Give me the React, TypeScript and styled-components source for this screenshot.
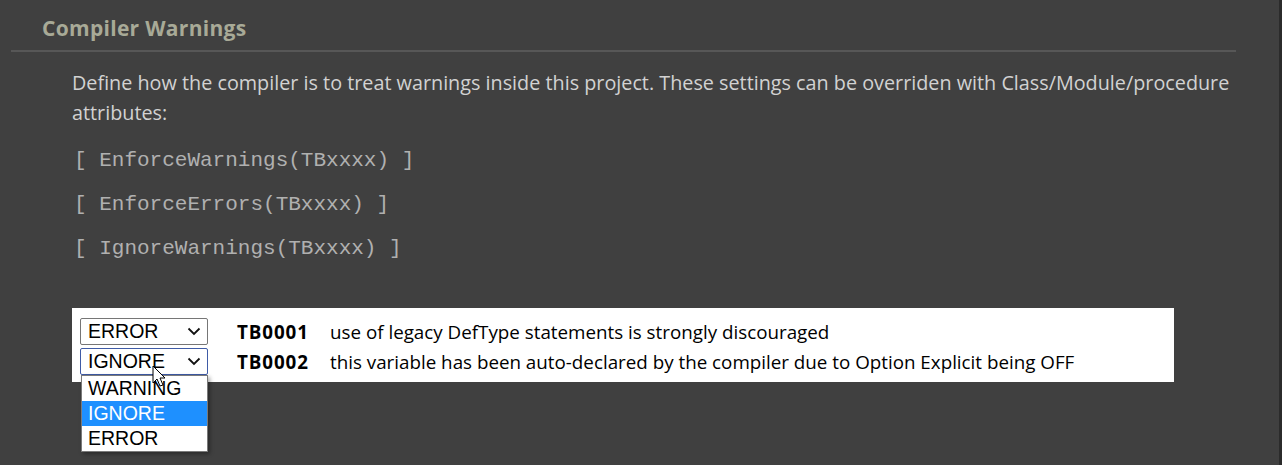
import React from "react";
import styled, { createGlobalStyle } from "styled-components";

const GlobalStyle = createGlobalStyle`
  html, body {
    margin: 0;
    padding: 0;
    background: #404040;
  }
  #root {
    height: 465px;
  }
`;

const Page = styled.div`
  display: flex;
  width: 1282px;
  height: 465px;
  overflow: hidden;
  background: #404040;
`;

const Content = styled.div`
  flex: 1;
  padding-left: 11px;
`;

const ScrollEdge = styled.div`
  width: 3px;
  background: #2b2b2b;
`;

const Heading = styled.h2`
  box-sizing: border-box;
  width: 1225px;
  margin: 0;
  padding: 15px 0 9px 31px;
  font-family: "Open Sans", "Noto Sans", sans-serif;
  font-weight: 700;
  font-size: 21px;
  letter-spacing: 0.3px;
  line-height: 26px;
  color: #a8aa97;
  border-bottom: 2px solid #575757;
`;

const Body = styled.div`
  display: flex;
  flex-direction: column;
  align-items: flex-start;
  padding: 16px 0 0 61px;
`;

const Intro = styled.p`
  margin: 0 0 4px;
  font-family: "Open Sans", "Noto Sans", sans-serif;
  font-size: 19.8px;
  line-height: 30px;
  color: #d2d2d2;
`;

const CodeLine = styled.div`
  margin-top: 14px;
  padding-left: 2px;
  font-family: "Liberation Mono", "Courier New", monospace;
  font-size: 21px;
  line-height: 30px;
  color: #b0b0b0;
  white-space: pre;
`;

const Table = styled.div`
  position: relative;
  margin-top: 44px;
  width: 1102px;
  padding: 10px 0 7px 8px;
  box-sizing: border-box;
  background: #ffffff;
  display: flex;
  flex-direction: column;
  gap: 3px;
`;

const Row = styled.div`
  display: flex;
  align-items: center;
  height: 27px;
  font-family: "Open Sans", "Noto Sans", sans-serif;
  font-size: 18.8px;
  color: #000;
`;

const Select = styled.div<{ $focused?: boolean }>`
  box-sizing: border-box;
  width: 128px;
  height: 27px;
  display: flex;
  align-items: center;
  justify-content: space-between;
  padding: 0 6px 0 7px;
  border: 1px solid ${(p) => (p.$focused ? "#3f5ba6" : "#767676")};
  border-radius: 2px;
  font-family: "Liberation Sans", Arial, sans-serif;
  font-size: 19.5px;
  color: #000;
  background: #fff;
`;

const Code = styled.span`
  width: 93px;
  margin-left: 29px;
  font-weight: 700;
  letter-spacing: 0.9px;
`;

const Desc = styled.span``;

const Menu = styled.div`
  position: absolute;
  left: 9px;
  top: 67px;
  width: 127px;
  box-sizing: border-box;
  border: 1px solid #7a7a7a;
  background: #fff;
  box-shadow: 2px 2px 4px rgba(0, 0, 0, 0.35);
  z-index: 2;
`;

const Option = styled.div<{ $active?: boolean }>`
  height: 25px;
  line-height: 25px;
  padding-left: 6px;
  font-family: "Liberation Sans", Arial, sans-serif;
  font-size: 19.5px;
  color: ${(p) => (p.$active ? "#fff" : "#000")};
  background: ${(p) => (p.$active ? "#1e90ff" : "#fff")};
`;

const Cursor = styled.svg`
  position: absolute;
  left: 80px;
  top: 57px;
  z-index: 3;
`;

const Chevron = () => (
  <svg width="14" height="9" viewBox="0 0 14 9">
    <path d="M1.5 1.5 L7 7 L12.5 1.5" fill="none" stroke="#111" strokeWidth="1.8" />
  </svg>
);

const rules = [
  { level: "ERROR", code: "TB0001", text: "use of legacy DefType statements is strongly discouraged" },
  {
    level: "IGNORE",
    code: "TB0002",
    text: "this variable has been auto-declared by the compiler due to Option Explicit being OFF",
  },
];

export default function App() {
  return (
    <Page>
      <GlobalStyle />
      <Content>
        <Heading>Compiler Warnings</Heading>
        <Body>
          <Intro>
            Define how the compiler is to treat warnings inside this project. These settings can be
            overriden with Class/Module/procedure attributes:
          </Intro>
          <CodeLine>[ EnforceWarnings(TBxxxx) ]</CodeLine>
          <CodeLine>[ EnforceErrors(TBxxxx) ]</CodeLine>
          <CodeLine>[ IgnoreWarnings(TBxxxx) ]</CodeLine>
          <Table>
            {rules.map((r, i) => (
              <Row key={r.code}>
                <Select $focused={i === 1}>
                  {r.level}
                  <Chevron />
                </Select>
                <Code>{r.code}</Code>
                <Desc>{r.text}</Desc>
              </Row>
            ))}
            <Menu>
              <Option>WARNING</Option>
              <Option $active>IGNORE</Option>
              <Option>ERROR</Option>
            </Menu>
            <Cursor width="16" height="24" viewBox="0 0 16 24">
              <path d="M1 1 L1 18 L5 14 L8 21 L11 20 L8 13 L13 13 Z" fill="#fff" stroke="#000" strokeWidth="1" />
            </Cursor>
          </Table>
        </Body>
      </Content>
      <ScrollEdge />
    </Page>
  );
}
